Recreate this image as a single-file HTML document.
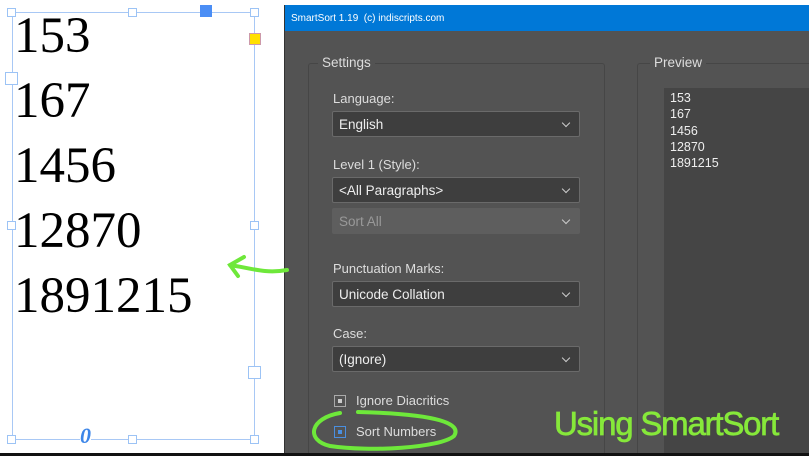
<!DOCTYPE html>
<html><head><meta charset="utf-8"><style>
*{margin:0;padding:0;box-sizing:border-box}
html,body{width:809px;height:456px;overflow:hidden}
body{background:#fff;position:relative;font-family:"Liberation Sans",sans-serif}
.a{position:absolute}
.num{position:absolute;left:14px;font-family:"Liberation Serif",serif;font-size:51px;color:#000;line-height:1}
.h{position:absolute;width:9px;height:9px;background:#fff;border:1px solid #9cc3f5}
.lbl{position:absolute;left:333px;color:#ddd;font-size:13px}
.dd{position:absolute;left:332px;width:248px;height:26px;background:#3e3e3e;border:1px solid #6a6a6a;border-radius:2px;color:#eee;font-size:13.5px;padding:5px 0 0 6px}
.dd:after{content:"";position:absolute;right:10px;top:8px;width:5px;height:5px;border-right:1.3px solid #ccc;border-bottom:1.3px solid #ccc;transform:rotate(45deg)}
.cb{position:absolute;left:334px;width:12px;height:12px;border:1px solid #aaa}
.cb i{position:absolute;left:3px;top:3px;width:4px;height:4px;background:#ccc}
</style></head><body>
<div class="a" style="left:12px;top:12px;width:243px;height:428px;border:1px solid #a8c8f5"></div>
<div class="h" style="left:7px;top:8px"></div>
<div class="h" style="left:128px;top:8px"></div>
<div class="a" style="left:200px;top:5px;width:12px;height:12px;background:#4b8ef5"></div>
<div class="h" style="left:250px;top:8px"></div>
<div class="a" style="left:249px;top:33px;width:12px;height:12px;background:#ffe000;border:1px solid #c9a"></div>
<div class="a" style="left:5px;top:72px;width:13px;height:13px;background:#fff;border:1px solid #9cc3f5"></div>
<div class="h" style="left:7px;top:221px"></div>
<div class="h" style="left:250px;top:221px"></div>
<div class="a" style="left:248px;top:366px;width:13px;height:13px;background:#fff;border:1px solid #9cc3f5"></div>
<div class="h" style="left:7px;top:435px"></div>
<div class="h" style="left:128px;top:435px"></div>
<div class="h" style="left:250px;top:435px"></div>
<div class="a" style="left:80px;top:425px;color:#3d86e8;font-family:'Liberation Serif',serif;font-style:italic;font-weight:bold;font-size:22px;background:#fff;line-height:1">0</div>
<div class="num" style="top:11px">153</div>
<div class="num" style="top:76px">167</div>
<div class="num" style="top:141px">1456</div>
<div class="num" style="top:206px">12870</div>
<div class="num" style="top:271px">1891215</div>

<div class="a" style="left:284px;top:5px;width:525px;height:448px;background:#535353;border-left:1px solid #333;overflow:hidden">
<div class="a" style="left:23px;top:58px;width:297px;height:400px;border:1px solid #464646;border-radius:3px"></div>
<div class="a" style="left:352px;top:58px;width:200px;height:400px;border:1px solid #464646;border-radius:3px"></div>
</div>
<div class="a" style="left:285px;top:5px;width:524px;height:26px;background:#0078d7;color:#fff;font-size:10px;padding:8px 0 0 6px">SmartSort 1.19&nbsp; (c) indiscripts.com</div>
<div class="a" style="left:318px;top:55px;background:#535353;color:#ddd;font-size:13.5px;padding:0 4px">Settings</div>
<div class="a" style="left:650px;top:55px;background:#535353;color:#ddd;font-size:13.5px;padding:0 4px">Preview</div>
<div class="a" style="left:664px;top:88px;width:145px;height:365px;background:#454545;color:#eee;font-size:12.5px;line-height:16.3px;padding:2px 0 0 6px">153<br>167<br>1456<br>12870<br>1891215</div>

<div class="lbl" style="top:91px">Language:</div>
<div class="dd" style="top:111px">English</div>
<div class="lbl" style="top:157px">Level 1 (Style):</div>
<div class="dd" style="top:177px">&lt;All Paragraphs&gt;</div>
<div class="dd" style="top:208px;background:#5e5e5e;border-color:#5e5e5e;color:#999">Sort All</div>
<div class="lbl" style="top:261px">Punctuation Marks:</div>
<div class="dd" style="top:281px">Unicode Collation</div>
<div class="lbl" style="top:326px">Case:</div>
<div class="dd" style="top:346px">(Ignore)</div>
<div class="cb" style="top:395px"><i></i></div>
<div class="lbl" style="left:356px;top:393px">Ignore Diacritics</div>
<div class="cb" style="top:426px;border-color:#4a8fe0"><i style="background:#4a8fe0"></i></div>
<div class="lbl" style="left:356px;top:424px">Sort Numbers</div>

<div class="a" style="left:554px;top:405px;color:#86e83a;font-size:33px;letter-spacing:-1.2px;-webkit-text-stroke:0.7px #86e83a">Using SmartSort</div>
<svg class="a" style="left:0;top:0" width="809" height="456">
<path d="M287 270 C265 274 250 268 230 265 M244 257 L230 265 L238 276" fill="none" stroke="#6ee83a" stroke-width="4" stroke-linecap="round"/>
<path d="M340 413 C310 418 305 440 330 446 C370 452 440 448 454 436 C462 424 440 414 358 412" fill="none" stroke="#6ee83a" stroke-width="4" stroke-linecap="round"/>
</svg>
<div class="a" style="left:0;top:453px;width:809px;height:3px;background:#111"></div>
</body></html>
